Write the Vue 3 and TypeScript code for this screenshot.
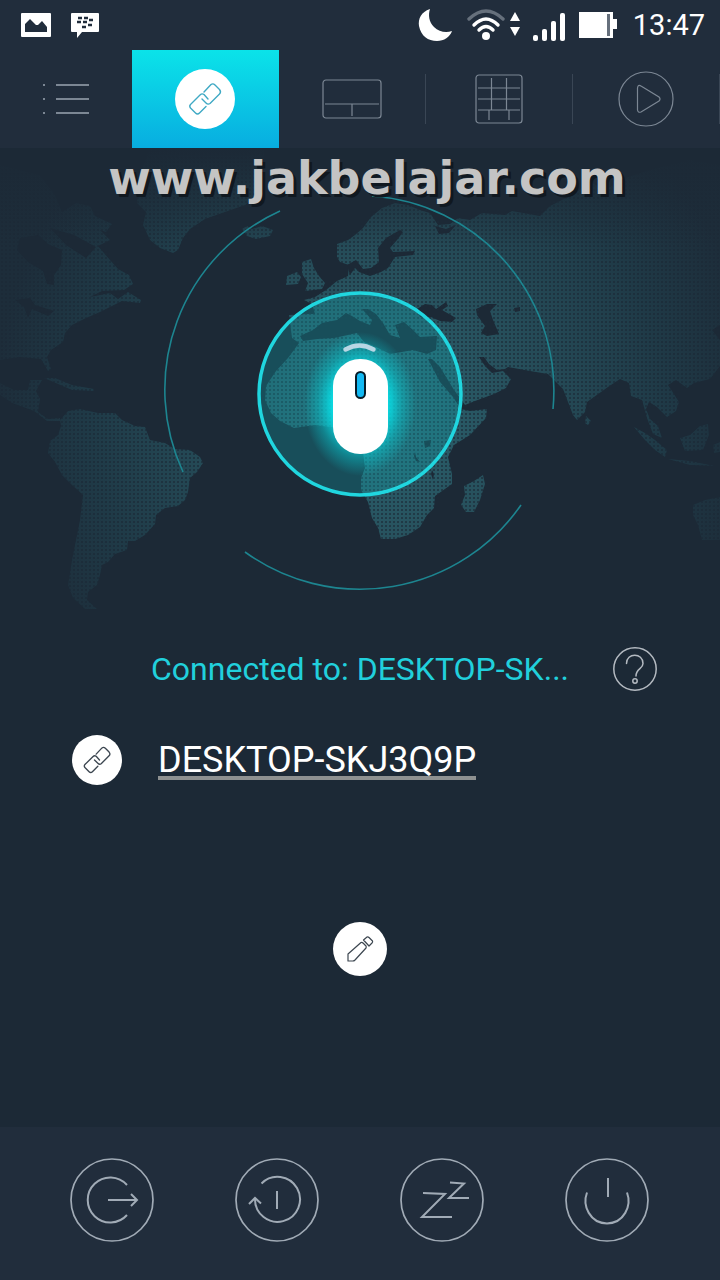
<script setup lang="ts">
import { ref } from 'vue'

type Tab = 'menu' | 'link' | 'touchpad' | 'keypad' | 'media'
const tabs: { id: Tab; label: string }[] = [
  { id: 'menu', label: 'Menu' },
  { id: 'link', label: 'Connection' },
  { id: 'touchpad', label: 'Touchpad' },
  { id: 'keypad', label: 'Keypad' },
  { id: 'media', label: 'Media' },
]
const active = ref<Tab>('link')

const actions = [
  { id: 'logout', label: 'Log out' },
  { id: 'restart', label: 'Restart' },
  { id: 'sleep', label: 'Sleep' },
  { id: 'power', label: 'Shut down' },
]

const device = 'DESKTOP-SKJ3Q9P'
</script>

<template>
  <div class="screen">
    <header class="top">
      <div class="status">
        <div class="notifications">
          <svg width="30" height="26" viewBox="0 0 30 26" aria-hidden="true">
            <rect x="0" y="1" width="30" height="24" rx="1" fill="#fff" />
            <path d="M4 20V12L9 7L15 13H17L21 9L26 15V20Z" fill="#212d3c" />
          </svg>
          <svg width="28" height="26" viewBox="0 0 28 26" aria-hidden="true">
            <path d="M1 1H27Q28 1 28 2V19Q28 20 27 20H11L6 26V20H1Q0 20 0 19V2Q0 1 1 1Z" fill="#fff" />
            <g stroke="#212d3c" stroke-width="2.6">
              <path d="M7 6H11M13 6H17M6 10H10M12 10H16M18 8H22M17 13H21M11 15H15" />
            </g>
          </svg>
        </div>
        <div class="system">
          <svg class="moon" width="34" height="34" viewBox="0 0 34 34" aria-hidden="true">
            <path d="M12 1C3 4 0 11 1 18C3 28 10 33 19 33C26 33 32 29 34 23C28 25 21 24 16 19C11 14 10 7 12 1Z" fill="#fff" />
          </svg>
          <svg class="wifi" width="54" height="34" viewBox="0 0 54 34" aria-hidden="true">
            <g fill="none" stroke="#fff" stroke-width="3.4" stroke-linecap="round">
              <path d="M2 11Q19 -5 36 11" stroke="#66707c" />
              <path d="M7 17Q19 5 31 17" />
              <path d="M12 22Q19 15 26 22" />
            </g>
            <circle cx="19" cy="28" r="4" fill="#fff" />
            <path d="M48 4L53 13H43ZM43 19H53L48 28Z" fill="#fff" />
          </svg>
          <svg class="signal" width="34" height="34" viewBox="0 0 34 34" aria-hidden="true">
            <g fill="#fff">
              <rect x="1" y="27" width="5" height="6" rx="2" />
              <rect x="10" y="21" width="5" height="12" rx="2" />
              <rect x="19" y="13" width="5" height="20" rx="2" />
              <rect x="28" y="5" width="5" height="28" rx="2" />
            </g>
          </svg>
          <svg class="battery" width="38" height="26" viewBox="0 0 38 26" aria-hidden="true">
            <path d="M0 0H34V7H38V17H34V26H0Z" fill="#fff" />
            <rect x="28" y="2" width="3" height="22" fill="#66707c" />
          </svg>
          <time class="clock">13:47</time>
        </div>
      </div>

      <nav class="tabs">
        <button
          v-for="tab in tabs"
          :key="tab.id"
          type="button"
          class="tab"
          :class="[tab.id, { active: active === tab.id }]"
          :aria-label="tab.label"
          @click="active = tab.id"
        >
          <svg v-if="tab.id === 'menu'" width="48" height="34" viewBox="0 0 48 34">
            <path d="M14 3H47M14 17H47M14 31H47M1 3H3M1 17H3M1 31H3" stroke="#7c8794" stroke-width="2" />
          </svg>
          <svg v-else-if="tab.id === 'link'" width="60" height="60" viewBox="0 0 60 60">
            <circle cx="30" cy="30" r="30" fill="#fff" />
            <g fill="none" stroke="#3fa9c4" stroke-width="1.4" stroke-linecap="round" stroke-linejoin="round">
              <path d="M29 23L36 15.500Q38 14 40 16L44.500 20.500Q46.500 23 44.500 25L35 34.500Q33 36 31 34L27 30" />
              <path d="M33 30L29 25.500Q27 24 25 26L15.500 35.500Q14 37 15.500 39L20.500 44Q22.500 46 24.500 44L31 37.500" />
            </g>
          </svg>
          <svg v-else-if="tab.id === 'touchpad'" width="60" height="40" viewBox="0 0 60 40">
            <g fill="none" stroke="#7c8794" stroke-width="1.200">
              <rect x="1" y="1" width="58" height="38" rx="3" />
              <path d="M3 25H57M30 25V37" />
            </g>
          </svg>
          <svg v-else-if="tab.id === 'keypad'" width="48" height="50" viewBox="0 0 48 50">
            <g fill="none" stroke="#7c8794" stroke-width="1.200">
              <rect x="1" y="1" width="46" height="48" rx="3" />
              <path d="M3 14H45M3 25H45M3 36H45M16.500 4V36M31.500 4V36M14 36V46M34 36V46" />
            </g>
          </svg>
          <svg v-else width="56" height="56" viewBox="0 0 56 56">
            <g fill="none" stroke="#7c8794" stroke-width="1.200">
              <circle cx="28" cy="28" r="27" />
              <path d="M19.500 17V39Q20 42 23 41L41 30Q43 28 41 26L23 15Q20 13 19.500 17Z" />
            </g>
          </svg>
        </button>
      </nav>
    </header>

    <main class="content">
      <section class="hero">
        <svg class="map" viewBox="0 148 720 472" role="img" aria-label="Mouse connected over a world map">
          <defs>
            <pattern id="dots" width="4" height="4" patternUnits="userSpaceOnUse">
              <rect width="4" height="4" fill="#fff" />
              <rect x="1" y="1" width="2" height="2" fill="#666" />
            </pattern>
            <radialGradient id="land" gradientUnits="userSpaceOnUse" cx="375" cy="410" r="380">
              <stop offset="0" stop-color="#2b6672" />
              <stop offset=".35" stop-color="#27515d" />
              <stop offset=".75" stop-color="#1f3a47" />
              <stop offset="1" stop-color="#1d2d3a" />
            </radialGradient>
            <radialGradient id="glow">
              <stop offset="0" stop-color="#08e2ea" />
              <stop offset=".5" stop-color="#08e2ea" stop-opacity=".9" />
              <stop offset=".75" stop-color="#08d2da" stop-opacity=".4" />
              <stop offset="1" stop-color="#08d2da" stop-opacity="0" />
            </radialGradient>
            <linearGradient id="shade" x1="0" y1="0" x2="0" y2="1">
              <stop offset="0" stop-color="#1c2936" />
              <stop offset="1" stop-color="#1c2936" stop-opacity="0" />
            </linearGradient>
            <mask id="continents" maskUnits="userSpaceOnUse" x="0" y="148" width="720" height="472">
              <g fill="url(#dots)">
                <path d="M140 175L150 148H265L258 195L245 205L225 212L205 219L190 229L183 238L178 250L173 253L160 248L150 240L143 225L146 212L137 203Z" />
                <path d="M242 229L247 226L252 229L262 226L273 230L270 236L256 239L247 236Z" />
                <path d="M0 165L40 175L55 195L62 212L76 203L90 206L95 216L112 224L106 232L100 230L110 240L98 246L110 260L118 269L129 275L133 284L124 290L102 291L90 297L110 293L118 299L128 292L141 300L140 303L122 301L100 312L84 319L72 325L65 333L63 342L51 350L47 357L51 369L48 371L41 359L20 357L0 360Z" />
                <path d="M0 383L14 390L28 390L30 380L42 380L36 391L40 399L38 412L48 419L60 418L60 421L47 421L34 411L12 403L0 395ZM44 378L55 378L72 385L94 389L94 391L72 390Z" />
                <path d="M60 420L68 411L80 409L98 413L115 413L122 420L135 426L145 427L150 440L165 443L175 449L190 450L200 457L203 463L197 472L190 478L188 492L185 500L178 506L165 508L156 515L155 524L145 535L135 541L128 541L127 550L115 554L108 562L102 565L100 575L97 585L88 592L87 600L97 609L85 609L73 598L68 585L72 560L75 545L80 520L83 495L72 485L62 475L55 462L48 453L50 441L58 435L61 426Z" />
                <path d="M337 257V244L348 240L355 235L363 228L371 217L382 208L395 203L408 205L420 210L430 213L438 225L450 224L458 218L470 220L482 213L505 215L512 211L540 216L550 206L562 200L575 193L590 182L605 190L625 178L650 170L690 160L720 165V325L712 330L720 340V366L710 379L694 383L687 388L676 380L668 385L672 391L679 402L676 411L667 417L657 407L649 402L646 409L650 419L658 426L662 438L653 434L647 418L642 400L631 396L629 383L620 379L608 387L594 397L587 402L585 412L577 420L573 415L568 402L563 389L556 382L548 374L530 371L508 367L505 369L497 370L489 364L484 357L479 357L485 366L492 373L503 371L511 379L506 388L494 394L475 401L465 405L454 390L440 367L432 359L428 359L440 382L453 397L461 409L470 411L487 409L486 418L470 435L454 445L448 457L452 474V484L435 496L434 508L427 515L420 527L408 535L395 539H381L378 528L372 518L368 502L361 490L361 478L365 468L363 452L352 438L346 427H330L315 425L294 428L280 421L271 413L265 400L266 386L276 371L288 358L299 343L292 338L289 315L308 314L315 314L312 304L304 300L315 297L326 290L337 281L348 276L349 265L340 262Z" />
                <path d="M302 262L311 259L314 268L319 276L325 283L322 289L305 291L308 283L302 274ZM287 276L297 272L301 277L298 284L286 285Z" />
                <path d="M483 475L485 484L480 500L474 512L466 512L461 505L465 495L464 486L474 481ZM586 416L591 421L588 425L585 423Z" />
                <path d="M634 427L645 433L655 440L667 450L665 457L655 450L645 440ZM680 438L690 435L700 426L708 424L709 435L703 450L685 451ZM668 459L690 461L715 466L690 465ZM713 445L720 442V452L714 453ZM693 505L705 500L720 497V540L702 540L698 525L693 515Z" />
              </g>
              <g fill="#000">
                <path d="M20 238L38 235L48 244L62 250L61 265L54 275L54 285L47 284L43 271L28 262L17 250ZM15 300L30 298L35 305L54 311L48 316L32 309L28 318L24 307ZM50 228L74 235L96 247L86 258L66 245Z" />
                <path d="M378 248L386 238L400 230L403 232L397 240L390 248L393 252L415 251L413 255L395 257L388 268L381 272L370 276L359 272L355 268L350 275L347 265L356 260L363 269L371 268L379 262Z" />
                <path d="M300 336L313 330L322 323L337 320L346 313L352 316L360 321L370 325L372 320L362 309L368 309L376 314L383 323L390 335L400 338L395 325L404 322L413 330L420 337L437 336L436 350L427 354L413 350L390 354L376 347L364 342L357 333L334 338L317 339L303 341Z" />
                <path d="M417 309L425 304L432 305L436 309L446 302L448 306L442 310L456 318L452 322L440 321L431 317L420 317ZM476 309L487 304L497 304L490 311L493 320L499 334L487 336L481 333L485 326L477 315ZM514 308L520 307L520 311L515 312ZM435 226L446 229L456 225L449 233L439 234Z" />
                <path d="M424 441L431 440L430 446L425 448ZM415 452L416 457L420 462L416 461L414 456ZM432 470L434 474L433 480L431 474Z" />
              </g>
            </mask>
          </defs>

          <rect x="0" y="148" width="720" height="472" fill="url(#land)" mask="url(#continents)" />
          <rect x="0" y="148" width="720" height="100" fill="url(#shade)" />

          <g fill="none" stroke="#1d8590" stroke-width="1.600">
            <path d="M280 211A196 196 0 0 0 183 472" />
            <path d="M372 196A195 195 0 0 1 553 409" />
            <path d="M245 552A196 196 0 0 0 521 505" />
          </g>

          <circle cx="360" cy="394" r="101" fill="#0fb4bb" fill-opacity=".27" />
          <ellipse cx="360" cy="404" rx="56" ry="72" fill="url(#glow)" />
          <circle cx="360" cy="394" r="101" fill="none" stroke="#20d6df" stroke-width="3.500" />
          <rect x="333" y="359" width="55" height="95" rx="27" fill="#fff" />
          <rect x="356" y="372" width="9" height="26" rx="4.500" fill="#12b9f3" stroke="#071c28" stroke-width="2" />
          <path d="M345.500 349.500Q359.500 341.500 373.500 349.500" fill="none" stroke="#b8d6e4" stroke-width="4.500" stroke-linecap="round" />
        </svg>
        <p class="site">www.jakbelajar.com</p>
      </section>

      <section class="connection">
        <h1 class="connected">Connected to: DESKTOP-SK...</h1>
        <button type="button" class="help" aria-label="Help">
          <svg width="44" height="44" viewBox="0 0 44 44">
            <g fill="none" stroke="#b4bac1" stroke-width="1.500">
              <circle cx="22" cy="22" r="21.200" />
              <path d="M13.500 16.500C13.500 5.500 30 5.500 30 16.500C30 22 23 21.500 23 29" stroke-linecap="round" />
              <circle cx="22" cy="34" r="2.200" />
            </g>
          </svg>
        </button>
      </section>

      <section class="device">
        <svg width="50" height="50" viewBox="0 0 60 60" aria-hidden="true">
          <circle cx="30" cy="30" r="30" fill="#fff" />
          <g fill="none" stroke="#3c4650" stroke-width="1.600" stroke-linecap="round" stroke-linejoin="round">
            <path d="M29 23L36 15.500Q38 14 40 16L44.500 20.500Q46.500 23 44.500 25L35 34.500Q33 36 31 34L27 30" />
            <path d="M33 30L29 25.500Q27 24 25 26L15.500 35.500Q14 37 15.500 39L20.500 44Q22.500 46 24.500 44L31 37.500" />
          </g>
        </svg>
        <a href="#" class="name" @click.prevent>{{ device }}</a>
      </section>

      <button type="button" class="edit" aria-label="Edit devices">
        <svg width="54" height="54" viewBox="0 0 54 54">
          <g fill="none" stroke="#3c4650" stroke-width="1.200" stroke-linejoin="round">
            <path d="M15 39V32L28 20.500Q29 20 30 21L33 24Q33.500 25 33 26L22 38Q21 39 20 39Z" />
            <path d="M30.500 18L34 15Q35 14.500 36 15.500L39.500 19Q40 20 39 21L36 24Z" />
          </g>
        </svg>
      </button>
    </main>

    <footer class="actions">
      <button v-for="a in actions" :key="a.id" type="button" class="action" :aria-label="a.label">
        <svg width="84" height="84" viewBox="0 0 84 84">
          <g fill="none" stroke="#a1abb6" stroke-width="2">
            <circle cx="42" cy="42" r="41" stroke-width="1.700" />
            <g v-if="a.id === 'logout'">
              <path d="M57 27A22.500 22.500 0 1 0 57 57" />
              <path d="M38 42H67M61 36L67 42L61 48" />
            </g>
            <g v-else-if="a.id === 'restart'">
              <path d="M26.500 25.500A22.500 22.500 0 1 1 20 41" />
              <path d="M14 46L20 40L26 45.500M42 33V51" />
            </g>
            <g v-else-if="a.id === 'sleep'">
              <path d="M23 35L45 36L22 59H52M50 24.500L64 25.500L49 40H69" />
            </g>
            <g v-else>
              <path d="M22 34.500C17 48 25 65 42 65.500C59 65 67 48 62 34.500" />
              <path d="M43 20V39" />
            </g>
          </g>
        </svg>
      </button>
    </footer>
  </div>
</template>

<style>
body {
  margin: 0;
  background: #1c2936;
}
</style>

<style scoped>
.screen {
  display: flex;
  flex-direction: column;
  min-height: 100vh;
  background: #1c2936;
  color: #fff;
  font-family: Roboto, 'Noto Sans', sans-serif;
}

svg {
  display: block;
}

button {
  padding: 0;
  border: 0;
  background: none;
  cursor: pointer;
}

.top {
  background: #212d3c;
}

.status {
  display: flex;
  justify-content: space-between;
  align-items: center;
  height: 50px;
  padding: 0 15px 0 21px;
}

.notifications,
.system {
  display: flex;
  align-items: center;
}

.notifications {
  gap: 20px;
}

.wifi {
  margin-left: 15px;
}

.signal {
  margin-left: 11px;
}

.battery {
  margin-left: 13px;
}

.clock {
  margin-left: 16px;
  font-size: 29px;
  line-height: 34px;
}

.tabs {
  display: grid;
  grid-template-columns: 132fr 147fr 147fr 147fr 147fr;
  height: 98px;
}

.tab {
  display: grid;
  place-items: center;
}

.tab + .tab {
  padding-right: 2px;
}

.tab.active {
  background: linear-gradient(#0be3e9, #08ade0);
}

.touchpad,
.keypad,
.media {
  background: linear-gradient(#3a4655, #3a4655) right center / 1px 50px no-repeat;
}

.content {
  display: flex;
  flex: 1;
  flex-direction: column;
}

.hero {
  position: relative;
}

.map {
  width: 100%;
}

.site {
  position: absolute;
  top: 2px;
  right: 0;
  left: 14px;
  margin: 0;
  color: #c4c4c4;
  font: bold 46px/56px 'DejaVu Sans', sans-serif;
  text-align: center;
  text-shadow: 3px 3px 0 #101820;
}

.connection {
  display: grid;
  grid-template-columns: 1fr auto 1fr;
  align-items: center;
  margin-top: 26px;
}

.connected {
  grid-column: 2;
  margin: 0;
  color: #21d0dc;
  font-size: 32px;
  font-weight: 400;
  line-height: 46px;
}

.help {
  justify-self: end;
  margin-right: 63px;
}

.device {
  display: flex;
  align-items: center;
  gap: 36px;
  margin-top: 43px;
  padding: 0 72px;
}

.name {
  padding-top: 4px;
  border-bottom: 4px solid #8e9191;
  color: #fff;
  font-size: 36px;
  line-height: 32px;
  text-decoration: none;
}

.edit {
  align-self: center;
  margin: 137px 0 40px;
  border-radius: 50%;
  background: #fff;
}

.actions {
  display: grid;
  grid-template-columns: repeat(4, 1fr);
  place-items: center;
  padding: 31px 31px 38px 29px;
  background: #212d3c;
}
</style>
